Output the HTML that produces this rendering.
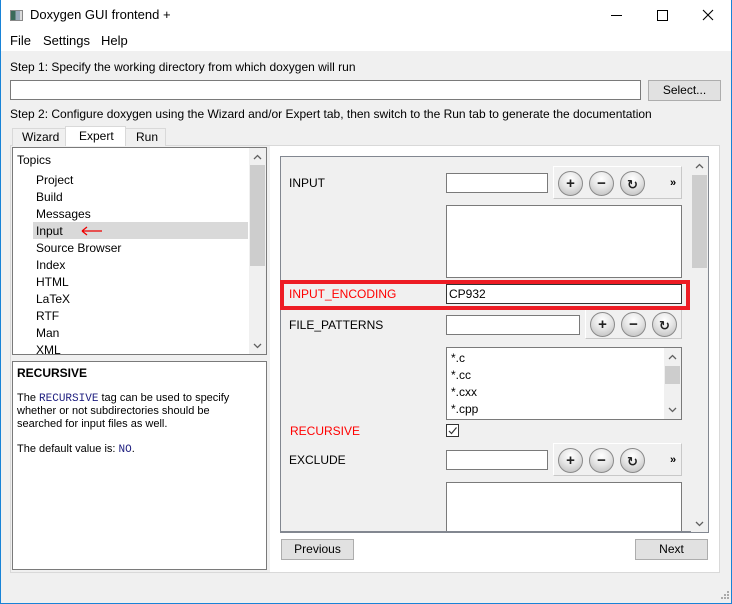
<!DOCTYPE html>
<html><head><meta charset="utf-8"><style>
*{box-sizing:border-box;margin:0;padding:0}
body{width:732px;height:604px;position:relative;background:#f0f0f0;font-family:"Liberation Sans","DejaVu Sans",sans-serif;font-size:12px;color:#000;overflow:hidden}
.a{position:absolute}
.t{position:absolute;white-space:nowrap;line-height:14px}
.in{position:absolute;background:#fff;border:1px solid #7a7a7a}
.btn{position:absolute;background:#e1e1e1;border:1px solid #adadad;text-align:center;line-height:18px}
.grp{position:absolute;border:1px solid #c8c8c8;border-top-color:#fff;border-left-color:#fff;background:#f0f0f0}
.c{position:absolute;width:25px;height:25px;border-radius:50%;border:1px solid #8a8a8a;background:radial-gradient(circle at 50% 30%,#fff 0%,#e6e6e6 45%,#b8b8b8 100%)}
.c span{position:absolute;left:0;right:0;top:4px;text-align:center;font-weight:bold;font-size:15px;line-height:15px;color:#222}
.red{color:#ff0000}
.ar{position:absolute;font-size:10px;color:#606060;line-height:10px}
</style></head><body>
<div class="a" style="left:0;top:0;width:732px;height:51px;background:#fff"></div>
<div class="a" style="left:0;top:0;width:1px;height:604px;background:#1883d7"></div>
<div class="a" style="right:0;top:0;width:1px;height:604px;background:#1883d7"></div>
<div class="a" style="left:0;bottom:0;width:732px;height:1px;background:#1883d7"></div>
<div class="a" style="left:10px;top:10px;width:13px;height:11px;background:linear-gradient(90deg,#3a6a5a 0 40%,#9ab 40% 80%,#ddd 80%);border:1px solid #888"></div>
<div class="t" style="left:30px;top:8px;font-size:13px">Doxygen GUI frontend +</div>
<div class="a" style="left:611px;top:15px;width:11px;height:1px;background:#000"></div>
<div class="a" style="left:657px;top:10px;width:11px;height:11px;border:1px solid #000"></div>
<svg class="a" style="left:702px;top:9px" width="12" height="12"><path d="M1 1L11 11M11 1L1 11" stroke="#000" stroke-width="1.1"/></svg>
<div class="t" style="left:10px;top:34px;font-size:13px">File</div>
<div class="t" style="left:43px;top:34px;font-size:13px">Settings</div>
<div class="t" style="left:101px;top:34px;font-size:13px">Help</div>
<div class="t" style="left:10px;top:60px">Step 1: Specify the working directory from which doxygen will run</div>
<div class="in" style="left:10px;top:80px;width:631px;height:20px"></div>
<div class="btn" style="left:648px;top:80px;width:73px;height:21px">Select...</div>
<div class="t" style="left:10px;top:107px">Step 2: Configure doxygen using the Wizard and/or Expert tab, then switch to the Run tab to generate the documentation</div>
<div class="a" style="left:10px;top:145px;width:710px;height:428px;background:#fff;border:1px solid #d9d9d9"></div>
<div class="a" style="left:12px;top:128px;width:54px;height:18px;border:1px solid #d9d9d9;border-bottom:none;background:#f0f0f0"></div>
<div class="t" style="left:22px;top:130px">Wizard</div>
<div class="a" style="left:65px;top:126px;width:61px;height:21px;border:1px solid #d9d9d9;border-bottom:none;background:#fff"></div>
<div class="t" style="left:79px;top:129px">Expert</div>
<div class="a" style="left:125px;top:128px;width:41px;height:18px;border:1px solid #d9d9d9;border-bottom:none;background:#f0f0f0"></div>
<div class="t" style="left:136px;top:130px">Run</div>
<div class="a" style="left:11px;top:146px;width:259px;height:426px;background:#f0f0f0"></div>
<div class="in" style="left:12px;top:147px;width:255px;height:208px;overflow:hidden">
 <div class="t" style="left:4px;top:5px">Topics</div>
 <div class="a" style="left:20px;top:74px;width:215px;height:17px;background:#d9d9d9"></div>
 <div class="t" style="left:23px;top:25px">Project</div>
 <div class="t" style="left:23px;top:42px">Build</div>
 <div class="t" style="left:23px;top:59px">Messages</div>
 <div class="t" style="left:23px;top:76px">Input</div>
 <svg class="a" style="left:68px;top:78px" width="22" height="10"><path d="M1 5H21M1 5L6 1M1 5L6 9" stroke="#e00" stroke-width="1.3" fill="none"/></svg>
 <div class="t" style="left:23px;top:93px">Source Browser</div>
 <div class="t" style="left:23px;top:110px">Index</div>
 <div class="t" style="left:23px;top:127px">HTML</div>
 <div class="t" style="left:23px;top:144px">LaTeX</div>
 <div class="t" style="left:23px;top:161px">RTF</div>
 <div class="t" style="left:23px;top:178px">Man</div>
 <div class="t" style="left:23px;top:195px">XML</div>
 <div class="a" style="left:236px;top:0;width:17px;height:206px;background:#f0f0f0"></div>
 <div class="a" style="left:237px;top:17px;width:15px;height:101px;background:#cdcdcd"></div>
 <svg class="a" style="left:240px;top:6px" width="9" height="6"><path d="M1 5L4.5 1.5L8 5" stroke="#606060" stroke-width="1.3" fill="none"/></svg>
 <svg class="a" style="left:240px;top:195px" width="9" height="6"><path d="M1 1L4.5 4.5L8 1" stroke="#606060" stroke-width="1.3" fill="none"/></svg>
</div>
<div class="in" style="left:12px;top:361px;width:255px;height:209px">
 <div class="t" style="left:4px;top:4px;font-weight:bold">RECURSIVE</div>
 <div class="t" style="left:4px;top:29px;font-size:11px">The <span style="font-family:'Liberation Mono',monospace;color:#202080">RECURSIVE</span> tag can be used to specify</div>
 <div class="t" style="left:4px;top:42px;font-size:11px">whether or not subdirectories should be</div>
 <div class="t" style="left:4px;top:55px;font-size:11px">searched for input files as well.</div>
 <div class="t" style="left:4px;top:80px;font-size:11px">The default value is: <span style="font-family:'Liberation Mono',monospace;color:#202080">NO</span>.</div>
</div>
<div class="a" style="left:280px;top:156px;width:429px;height:377px;background:#f0f0f0;border:1px solid #828790;overflow:hidden">
 <div class="a" style="left:410px;top:0;width:17px;height:375px;background:#f0f0f0"></div>
 <div class="a" style="left:411px;top:18px;width:15px;height:93px;background:#cdcdcd"></div>
 <svg class="a" style="left:414px;top:6px" width="9" height="6"><path d="M1 5L4.5 1.5L8 5" stroke="#606060" stroke-width="1.3" fill="none"/></svg>
 <svg class="a" style="left:414px;top:364px" width="9" height="6"><path d="M1 1L4.5 4.5L8 1" stroke="#606060" stroke-width="1.3" fill="none"/></svg>
</div>
<div class="t" style="left:289px;top:176px">INPUT</div>
<div class="in" style="left:446px;top:173px;width:102px;height:20px"></div>
<div class="grp" style="left:553px;top:166px;width:129px;height:33px"></div>
<div class="c" style="left:558px;top:171px"><span>+</span></div>
<div class="c" style="left:589px;top:171px"><span>&minus;</span></div>
<div class="c" style="left:620px;top:171px"><span style="font-size:13px;top:5px">&#8635;</span></div>
<div class="t" style="left:670px;top:176px;font-weight:bold;font-size:11px">&raquo;</div>
<div class="in" style="left:446px;top:205px;width:236px;height:73px"></div>
<div class="t" style="left:289px;top:318px">FILE_PATTERNS</div>
<div class="in" style="left:446px;top:315px;width:134px;height:20px"></div>
<div class="grp" style="left:585px;top:306px;width:97px;height:33px"></div>
<div class="c" style="left:590px;top:312px"><span>+</span></div>
<div class="c" style="left:621px;top:312px"><span>&minus;</span></div>
<div class="c" style="left:652px;top:312px"><span style="font-size:13px;top:5px">&#8635;</span></div>
<div class="a" style="left:280px;top:280px;width:410px;height:30px;border:4px solid #ed1c24;z-index:5"></div>
<div class="t red" style="left:289px;top:287px">INPUT_ENCODING</div>
<div class="in" style="left:446px;top:284px;width:236px;height:20px;border-color:#333"><div class="t" style="left:2px;top:2px">CP932</div></div>
<div class="in" style="left:446px;top:347px;width:236px;height:73px;overflow:hidden">
 <div class="t" style="left:4px;top:3px">*.c</div>
 <div class="t" style="left:4px;top:20px">*.cc</div>
 <div class="t" style="left:4px;top:37px">*.cxx</div>
 <div class="t" style="left:4px;top:54px">*.cpp</div>
 <div class="a" style="left:217px;top:0;width:17px;height:71px;background:#f0f0f0"></div>
 <div class="a" style="left:218px;top:18px;width:15px;height:18px;background:#cdcdcd"></div>
 <svg class="a" style="left:221px;top:6px" width="9" height="6"><path d="M1 5L4.5 1.5L8 5" stroke="#606060" stroke-width="1.3" fill="none"/></svg>
 <svg class="a" style="left:221px;top:59px" width="9" height="6"><path d="M1 1L4.5 4.5L8 1" stroke="#606060" stroke-width="1.3" fill="none"/></svg>
</div>
<div class="t red" style="left:290px;top:424px">RECURSIVE</div>
<div class="a" style="left:446px;top:424px;width:13px;height:13px;border:1px solid #333;background:#fff"></div>
<svg class="a" style="left:447px;top:425px" width="11" height="11"><path d="M2 6L4.5 8.5L9.5 2.5" stroke="#333" stroke-width="1.2" fill="none"/></svg>
<div class="t" style="left:289px;top:453px">EXCLUDE</div>
<div class="in" style="left:446px;top:450px;width:102px;height:20px"></div>
<div class="grp" style="left:553px;top:443px;width:129px;height:33px"></div>
<div class="c" style="left:558px;top:448px"><span>+</span></div>
<div class="c" style="left:589px;top:448px"><span>&minus;</span></div>
<div class="c" style="left:620px;top:448px"><span style="font-size:13px;top:5px">&#8635;</span></div>
<div class="t" style="left:670px;top:453px;font-weight:bold;font-size:11px">&raquo;</div>
<div class="in" style="left:446px;top:482px;width:236px;height:50px;border-bottom:none"></div>
<div class="a" style="left:280px;top:531px;width:411px;height:1px;background:#828790"></div>
<div class="btn" style="left:281px;top:539px;width:73px;height:21px">Previous</div>
<div class="btn" style="left:635px;top:539px;width:73px;height:21px">Next</div>
<svg class="a" style="left:719px;top:591px" width="11" height="11"><g fill="#aaa"><rect x="8" y="0" width="2" height="2"/><rect x="5" y="3" width="2" height="2"/><rect x="8" y="3" width="2" height="2"/><rect x="2" y="6" width="2" height="2"/><rect x="5" y="6" width="2" height="2"/><rect x="8" y="6" width="2" height="2"/></g></svg>
</body></html>
